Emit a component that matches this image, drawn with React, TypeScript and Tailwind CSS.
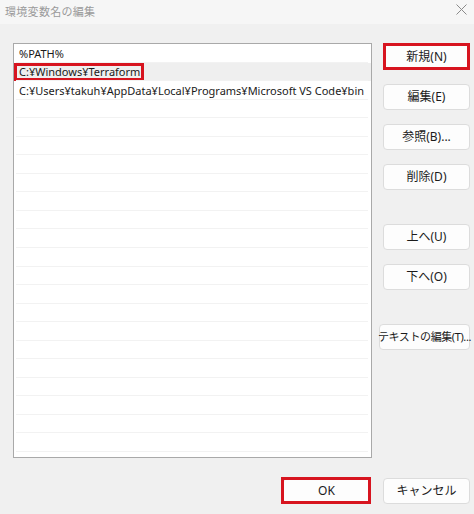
import React from "react";

const font = { fontFamily: '"Noto Sans", "Noto Sans CJK JP", sans-serif' };

const rows = [
  "%PATH%",
  "C:¥Windows¥Terraform",
  "C:¥Users¥takuh¥AppData¥Local¥Programs¥Microsoft VS Code¥bin",
];

function Btn({
  label,
  red,
  wide,
  ok,
}: {
  label: string;
  red?: boolean;
  wide?: boolean;
  ok?: boolean;
}) {
  return (
    <div
      className={
        "relative h-[26px] flex items-center justify-center rounded-[4px] border border-[#dcdcdc] bg-[#fdfdfd] text-[#1b1b1b] whitespace-nowrap " +
        (wide
          ? "w-[91px] -ml-[4px] text-[11px] tracking-[-0.4px] "
          : "w-[87px] text-[12px] ")
      }
    >
      {label}
      {red && (
        <div
          className={
            "absolute -top-[2px] -bottom-[1px] border-[3px] border-[#d7141f] " +
            (ok ? "-left-[3px] -right-[2px]" : "-left-[1px] -right-[1px]")
          }
        />
      )}
    </div>
  );
}

export default function App() {
  const allRows = Array.from({ length: 23 }, (_, i) => rows[i] ?? "");
  return (
    <div
      className="w-[474px] h-[514px] bg-[#f0f0f0] flex flex-col overflow-hidden"
      style={font}
    >
      <div className="h-[24px] flex items-center justify-between pl-[5px] pr-[7px] bg-[#f6f6f6]">
        <span className="text-[11px] text-[#9a9a9a] tracking-[0.3px]">
          環境変数名の編集
        </span>
        <svg width="11" height="11" viewBox="0 0 11 11" className="-mt-[5px]">
          <path d="M0.5 0.5 L10.5 10.5 M10.5 0.5 L0.5 10.5" stroke="#8a8a8a" strokeWidth="1" />
        </svg>
      </div>
      <div className="flex pt-[19px] pl-[13px]">
        <div className="w-[359px] h-[415px] border border-[#a9a9a9] bg-white overflow-hidden">
          {allRows.map((t, i) => (
            <div
              key={i}
              className={
                "h-[18.55px] relative flex items-center " +
                (i === 1 ? "bg-[#efefef]" : "")
              }
            >
              <span className="pl-[5px] text-[11px] leading-none text-[#1a1a1a] whitespace-nowrap">
                {t}
              </span>
              {i === 1 && (
                <div className="absolute left-0 top-0 h-full w-[130px] border-[3px] border-[#d7141f]" />
              )}
              <div className="absolute left-[2px] right-[3px] bottom-0 h-px bg-[#f2f2f2]" />
            </div>
          ))}
        </div>
        <div className="ml-[11px] pt-[1px] flex flex-col">
          <Btn label="新規(N)" red />
          <div className="h-[14px]" />
          <Btn label="編集(E)" />
          <div className="h-[14px]" />
          <Btn label="参照(B)..." />
          <div className="h-[14px]" />
          <Btn label="削除(D)" />
          <div className="h-[34px]" />
          <Btn label="上へ(U)" />
          <div className="h-[14px]" />
          <Btn label="下へ(O)" />
          <div className="h-[34px]" />
          <Btn label="テキストの編集(T)..." wide />
        </div>
      </div>
      <div className="flex pt-[20px] pl-[283px] gap-[13px]">
        <Btn label="OK" red ok />
        <Btn label="キャンセル" />
      </div>
    </div>
  );
}
